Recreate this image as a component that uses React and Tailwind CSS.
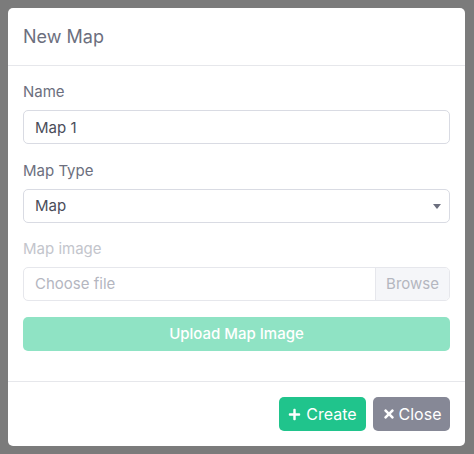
import React from 'react';
import { FaPlus, FaTimes } from 'react-icons/fa';

export default function App() {
  return (
    <div className="w-[474px] h-[454px] bg-[#7b7b7b] pt-2 overflow-hidden" style={{ fontFamily: 'Inter, "Noto Sans", sans-serif' }}>
      <div className="ml-2 w-[457px] h-[438px] bg-white rounded-[5px] flex flex-col">
        {/* header */}
        <div className="h-[58px] px-[15px] flex items-center border-b border-[#e6e7eb]">
          <h2 className="text-[18px] text-[#6c6f7e] font-normal">New Map</h2>
        </div>

        {/* body */}
        <div className="px-[15px] pt-[15px] pb-[30px] flex flex-col border-b border-[#e6e7eb]">
          <label className="text-[15px] leading-[22px] text-[#6c6f7e] mb-[7px]">Name</label>
          <input
            className="h-[34px] w-full rounded-[5px] border border-[#d9dbe3] px-[11px] text-[15px] text-[#4a4d5a] outline-none"
            defaultValue="Map 1"
          />

          <label className="text-[15px] leading-[22px] text-[#6c6f7e] mt-4 mb-[7px]">Map Type</label>
          <div className="relative h-[34px] w-full rounded-[5px] border border-[#d9dbe3] px-[11px] flex items-center">
            <span className="text-[15px] text-[#4a4d5a]">Map</span>
            <span className="absolute right-[8px] top-[14px] w-0 h-0 border-l-[4px] border-r-[4px] border-t-[5px] border-l-transparent border-r-transparent border-t-[#6c6f7e]"></span>
          </div>

          <label className="text-[15px] leading-[22px] text-[#c3c5cc] mt-[15px] mb-[7px]">Map image</label>
          <div className="h-[34px] w-full rounded-[5px] border border-[#e6e7ec] flex overflow-hidden">
            <span className="flex-1 flex items-center px-[11px] text-[15px] text-[#b4b6bf]">Choose file</span>
            <span className="w-[74px] flex items-center justify-center bg-[#f5f6f9] border-l border-[#e6e7ec] text-[15px] text-[#b4b6bf]">Browse</span>
          </div>

          <button className="mt-4 h-[34px] w-full rounded-[5px] bg-[#8fe3c4] text-white text-[15px] font-medium">
            Upload Map Image
          </button>
        </div>

        {/* footer */}
        <div className="flex-1 px-[15px] flex items-start justify-end gap-[7px] pt-[15px]">
          <button className="h-[34px] w-[87px] rounded-[5px] bg-[#20c48c] text-white text-[16px] flex items-center justify-center gap-[5px]">
            <FaPlus className="w-[13px] h-[13px]" />
            Create
          </button>
          <button className="h-[34px] w-[77px] rounded-[5px] bg-[#868896] text-white text-[16px] flex items-center justify-center gap-[3px]">
            <FaTimes className="w-[14px] h-[14px]" />
            Close
          </button>
        </div>
      </div>
    </div>
  );
}
